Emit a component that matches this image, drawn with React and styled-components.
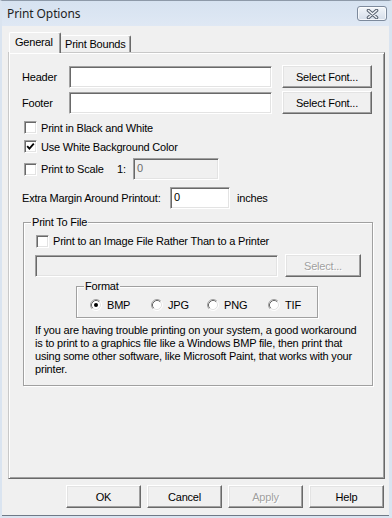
import React from "react";
import styled, { createGlobalStyle, css } from "styled-components";

const GlobalStyle = createGlobalStyle`
  html, body { margin: 0; padding: 0; background: #f0f0f0; }
  body {
    font-family: "Liberation Sans", Arial, sans-serif;
    font-size: 11px;
    letter-spacing: -0.2px;
    color: #000;
  }
  * { box-sizing: border-box; }
`;

const raised = css`
  border: 1px solid;
  border-color: #fff #696969 #696969 #fff;
  box-shadow: inset -1px -1px 0 #a0a0a0, inset 1px 1px 0 #e3e3e3;
`;

const sunken = css`
  border: 1px solid;
  border-color: #a0a0a0 #fff #fff #a0a0a0;
  box-shadow: inset 1px 1px 0 #696969, inset -1px -1px 0 #e3e3e3;
`;

const Window = styled.div`
  width: 392px;
  height: 518px;
  display: flex;
  flex-direction: column;
  background: #dae4f0;
  border-top: 1px solid #8d99a8;
  border-left: 2px solid #dae4f0;
  border-right: 3px solid #dae4f0;
  border-bottom: 2px solid #dae4f0;
`;

const TitleBar = styled.div`
  height: 25px;
  display: flex;
  align-items: flex-start;
  justify-content: space-between;
  padding-left: 5px;
  background: linear-gradient(#d6e2f0, #dfe8f4);
`;

const TitleText = styled.span`
  font-family: "Noto Sans", "Open Sans", sans-serif;
  font-size: 12px;
  letter-spacing: -0.1px;
  line-height: 25px;
  color: #1e1e1e;
`;

const CloseButton = styled.div`
  width: 30px;
  height: 15px;
  margin-top: 5px;
  margin-right: 2px;
  border: 1px solid #7d8a9c;
  border-radius: 3px;
  background: linear-gradient(#f3f6fa, #d4dde9);
  box-shadow: inset 0 0 0 1px rgba(255, 255, 255, 0.7);
  display: flex;
  align-items: center;
  justify-content: center;
`;

const Client = styled.div`
  flex: 1;
  display: flex;
  flex-direction: column;
  background: #f0f0f0;
  padding: 6px 4px 7px 6px;
  border-bottom: 1px solid #6f7986;
`;

const TabRow = styled.div`
  height: 20px;
  display: flex;
  align-items: flex-end;
  padding-left: 1px;
`;

const Tab = styled.div`
  position: relative;
  background: #f0f0f0;
  border-top: 1px solid #fff;
  border-right: 1px solid #696969;
  box-shadow: inset -1px 0 0 #a0a0a0;
  border-radius: 2px 2px 0 0;
  display: flex;
  align-items: center;
  ${(p) =>
    p.$active
      ? css`
          z-index: 1;
          height: 21px;
          margin-bottom: -1px;
          border-left: 1px solid #fff;
          width: 52px;
          padding-left: 5px;
          padding-bottom: 2px;
        `
      : css`
          height: 17px;
          width: 70px;
          padding-left: 4px;
        `}
`;

const Panel = styled.div`
  flex: 1;
  display: flex;
  flex-direction: column;
  border: 1px solid;
  border-color: #c8c8c8 #696969 #696969 #c8c8c8;
  box-shadow: inset 1px 1px 0 #fff, inset -1px -1px 0 #a0a0a0;
  padding: 12px 0 0 13px;
`;

const Row = styled.div`
  display: flex;
  align-items: center;
  height: ${(p) => p.$h || 23}px;
  margin-top: ${(p) => p.$mt || 0}px;
  margin-left: ${(p) => p.$ml || 0}px;
`;

const Label = styled.span`
  flex: none;
  width: ${(p) => (p.$w ? `${p.$w}px` : "auto")};
  margin-left: ${(p) => p.$ml || 0}px;
  white-space: nowrap;
  color: ${(p) => (p.$disabled ? "#a0a0a0" : "#000")};
`;

const TextBox = styled.div`
  ${sunken};
  flex: none;
  width: ${(p) => p.$w}px;
  height: 22px;
  background: ${(p) => (p.$disabled ? "#f0f0f0" : "#fff")};
  color: ${(p) => (p.$disabled ? "#6d6d6d" : "#000")};
  padding: 2px 0 0 3px;
  line-height: 14px;
`;

const Button = styled.div`
  ${raised};
  flex: none;
  width: ${(p) => p.$w || 75}px;
  height: 23px;
  margin-left: ${(p) => p.$ml || 0}px;
  background: #f0f0f0;
  display: flex;
  align-items: center;
  justify-content: center;
  color: ${(p) => (p.$disabled ? "#a0a0a0" : "#000")};
  text-shadow: ${(p) => (p.$disabled ? "1px 1px 0 #fff" : "none")};
`;

const CheckBoxBox = styled.div`
  ${sunken};
  flex: none;
  width: 13px;
  height: 13px;
  background: #fff;
  margin-right: 4px;
  display: flex;
  align-items: center;
  justify-content: center;
`;

const GroupBox = styled.div`
  position: relative;
  flex: none;
  width: ${(p) => p.$w}px;
  height: ${(p) => p.$h}px;
  margin-top: ${(p) => p.$mt || 0}px;
  margin-left: ${(p) => p.$ml || 0}px;
  border: 1px solid #a0a0a0;
  box-shadow: inset 1px 1px 0 #fff, 1px 1px 0 #fff;
  padding: ${(p) => p.$pad};
  display: flex;
  flex-direction: column;
`;

const Legend = styled.span`
  position: absolute;
  top: -7px;
  left: 7px;
  padding: 0 1px;
  line-height: 13px;
  background: #f0f0f0;
  white-space: nowrap;
`;

const RadioRow = styled.div`
  display: grid;
  grid-template-columns: 61px 56px 61px auto;
  height: 16px;
  align-items: center;
`;

const RadioItem = styled.div`
  display: flex;
  align-items: center;
`;

const RadioLabel = styled.span`
  margin-left: 5px;
`;

const Paragraph = styled.p`
  margin: 6px 0 0 0;
  line-height: 13px;
  white-space: nowrap;
`;

const ButtonRow = styled.div`
  display: flex;
  justify-content: flex-end;
  gap: 6px;
  margin-top: 6px;
  margin-right: 1px;
`;

const CloseGlyph = () => (
  <svg width="13" height="10" viewBox="0 0 13 10">
    <path d="M2.5 1.5 L10.5 8.5 M10.5 1.5 L2.5 8.5" stroke="#56606e" strokeWidth="3.6" strokeLinecap="round" />
    <path d="M2.5 1.5 L10.5 8.5 M10.5 1.5 L2.5 8.5" stroke="#eef1f5" strokeWidth="1.6" strokeLinecap="round" />
  </svg>
);

const CheckMark = () => (
  <svg width="9" height="9" viewBox="0 0 9 9">
    <path d="M1.2 4.2 L3.4 6.6 L7.8 1.6" stroke="#000" strokeWidth="1.8" fill="none" />
  </svg>
);

const Check = ({ checked, children, ...rest }) => (
  <Row $h={rest.h || 19} $mt={rest.mt} $ml={rest.ml}>
    <CheckBoxBox>{checked && <CheckMark />}</CheckBoxBox>
    {children}
  </Row>
);

const Radio = ({ checked }) => (
  <svg width="12" height="12" viewBox="0 0 12 12">
    <circle cx="6" cy="6" r="5" fill="#fff" />
    <path d="M2.11 9.89 A5.5 5.5 0 0 1 9.89 2.11" stroke="#a0a0a0" fill="none" />
    <path d="M9.89 2.11 A5.5 5.5 0 0 1 2.11 9.89" stroke="#ffffff" fill="none" />
    <path d="M2.82 9.18 A4.5 4.5 0 0 1 9.18 2.82" stroke="#696969" fill="none" />
    <path d="M9.18 2.82 A4.5 4.5 0 0 1 2.82 9.18" stroke="#e3e3e3" fill="none" />
    {checked && <circle cx="6" cy="6" r="2" fill="#000" />}
  </svg>
);

export default function App() {
  return (
    <>
      <GlobalStyle />
      <Window>
        <TitleBar>
          <TitleText>Print Options</TitleText>
          <CloseButton>
            <CloseGlyph />
          </CloseButton>
        </TitleBar>
        <Client>
          <TabRow>
            <Tab $active>General</Tab>
            <Tab>Print Bounds</Tab>
          </TabRow>
          <Panel>
            <Row>
              <Label $w={47}>Header</Label>
              <TextBox $w={203} />
              <Button $w={90} $ml={10}>Select Font...</Button>
            </Row>
            <Row $mt={3}>
              <Label $w={47}>Footer</Label>
              <TextBox $w={203} />
              <Button $w={90} $ml={10}>Select Font...</Button>
            </Row>
            <Check mt={4} ml={2}>
              <Label>Print in Black and White</Label>
            </Check>
            <Check ml={2} checked>
              <Label>Use White Background Color</Label>
            </Check>
            <Check mt={2} ml={2} h={22}>
              <Label $w={76}>Print to Scale</Label>
              <Label $w={16}>1:</Label>
              <TextBox $w={86} $disabled>0</TextBox>
            </Check>
            <Row $h={22} $mt={7}>
              <Label $w={148}>Extra Margin Around Printout:</Label>
              <TextBox $w={60}>0</TextBox>
              <Label $ml={7}>inches</Label>
            </Row>
            <GroupBox $w={350} $h={164} $mt={13} $ml={1} $pad="9px 0 0 11px">
              <Legend>Print To File</Legend>
              <Check h={18} ml={1}>
                <Label>Print to an Image File Rather Than to a Printer</Label>
              </Check>
              <Row $mt={4}>
                <TextBox $w={243} $disabled />
                <Button $w={76} $ml={7} $disabled>Select...</Button>
              </Row>
              <GroupBox $w={242} $h={32} $mt={9} $ml={41} $pad="10px 0 0 13px">
                <Legend>Format</Legend>
                <RadioRow>
                  <RadioItem>
                    <Radio checked />
                    <RadioLabel>BMP</RadioLabel>
                  </RadioItem>
                  <RadioItem>
                    <Radio />
                    <RadioLabel>JPG</RadioLabel>
                  </RadioItem>
                  <RadioItem>
                    <Radio />
                    <RadioLabel>PNG</RadioLabel>
                  </RadioItem>
                  <RadioItem>
                    <Radio />
                    <RadioLabel>TIF</RadioLabel>
                  </RadioItem>
                </RadioRow>
              </GroupBox>
              <Paragraph>
                If you are having trouble printing on your system, a good workaround
                <br />
                is to print to a graphics file like a Windows BMP file, then print that
                <br />
                using some other software, like Microsoft Paint, that works with your
                <br />
                printer.
              </Paragraph>
            </GroupBox>
          </Panel>
          <ButtonRow>
            <Button>OK</Button>
            <Button>Cancel</Button>
            <Button $disabled>Apply</Button>
            <Button>Help</Button>
          </ButtonRow>
        </Client>
      </Window>
    </>
  );
}
